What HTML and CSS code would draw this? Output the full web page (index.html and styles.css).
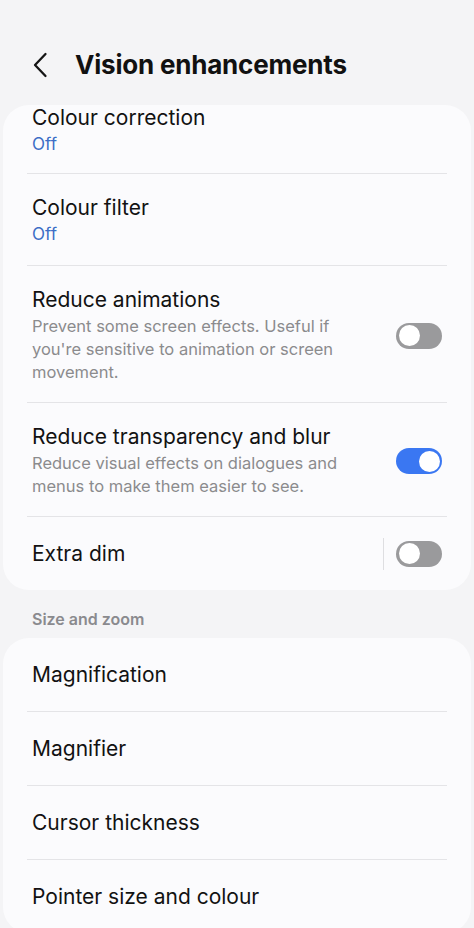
FILE: index.html
```html
<!DOCTYPE html>
<html lang="en">
<head>
<meta charset="utf-8">
<title>Vision enhancements</title>
<link rel="stylesheet" href="styles.css">
</head>
<body>
<div class="page">
  <header class="appbar">
    <svg class="back" width="16" height="26" viewBox="0 0 16 26" aria-hidden="true">
      <path d="M13.5 2 L3 13 L13.5 24" fill="none" stroke="#151515" stroke-width="2.3" stroke-linecap="round" stroke-linejoin="round"/>
    </svg>
    <h1 class="title">Vision enhancements</h1>
  </header>

  <section class="card">
    <div class="row row-first">
      <div class="text">
        <div class="label">Colour correction</div>
        <div class="value">Off</div>
      </div>
    </div>
    <div class="divider"></div>
    <div class="row">
      <div class="text">
        <div class="label">Colour filter</div>
        <div class="value">Off</div>
      </div>
    </div>
    <div class="divider"></div>
    <div class="row row-desc">
      <div class="text">
        <div class="label">Reduce animations</div>
        <div class="desc">Prevent some screen effects. Useful if you're sensitive to animation or screen movement.</div>
      </div>
      <div class="switch"><span class="knob"></span></div>
    </div>
    <div class="divider"></div>
    <div class="row row-desc">
      <div class="text">
        <div class="label">Reduce transparency and blur</div>
        <div class="desc">Reduce visual effects on dialogues and menus to make them easier to see.</div>
      </div>
      <div class="switch on"><span class="knob"></span></div>
    </div>
    <div class="divider"></div>
    <div class="row row-single">
      <div class="text">
        <div class="label">Extra dim</div>
      </div>
      <div class="vsep"></div>
      <div class="switch"><span class="knob"></span></div>
    </div>
  </section>

  <div class="section-title">Size and zoom</div>

  <section class="card">
    <div class="row row-single"><div class="label">Magnification</div></div>
    <div class="divider"></div>
    <div class="row row-single"><div class="label">Magnifier</div></div>
    <div class="divider"></div>
    <div class="row row-single"><div class="label">Cursor thickness</div></div>
    <div class="divider"></div>
    <div class="row row-single"><div class="label">Pointer size and colour</div></div>
  </section>
</div>
</body>
</html>
```

FILE: styles.css
```css
html, body {
  margin: 0;
  padding: 0;
  background: #f4f4f6;
}

body {
  font-family: Inter, "Noto Sans", Roboto, sans-serif;
  color: #121212;
  overflow: hidden;
}

.page {
  display: flex;
  flex-direction: column;
  height: 928px;
  overflow: hidden;
}

.appbar {
  height: 105px;
  display: flex;
  align-items: center;
  padding: 24px 0 0 32px;
  box-sizing: border-box;
  flex-shrink: 0;
}

.back {
  display: block;
  margin-right: 27px;
}

.title {
  margin: 0;
  font-size: 26px;
  font-weight: 700;
  letter-spacing: -0.2px;
  color: #111;
}

.card {
  background: #fbfbfd;
  border-radius: 26px;
  margin: 0 3px;
  flex-shrink: 0;
}

.row {
  display: flex;
  align-items: center;
  padding: 21px 29px 19px 29px;
}

.row-desc {
  padding-bottom: 18px;
}

.row-first {
  padding-top: 0;
  padding-bottom: 17px;
}

.row-single {
  height: 73px;
  padding-top: 0;
  padding-bottom: 0;
  box-sizing: border-box;
}

.text {
  flex: 1;
  min-width: 0;
}

.label {
  font-size: 21px;
  line-height: 26px;
  color: #121212;
}

.value {
  margin-top: 2px;
  font-size: 17px;
  line-height: 23px;
  color: #3c6ec6;
}

.desc {
  margin-top: 2px;
  font-size: 16.5px;
  line-height: 23px;
  color: #8b8b8d;
  padding-right: 44px;
}

.divider {
  height: 1px;
  background: #e4e4e7;
  margin: 0 24px;
}

.vsep {
  width: 1px;
  height: 32px;
  background: #dedee1;
  margin-right: 12px;
}

.switch {
  width: 46px;
  height: 26px;
  border-radius: 13px;
  background: #9a9a9c;
  display: flex;
  align-items: center;
  justify-content: flex-start;
  padding: 0 2.5px;
  box-sizing: border-box;
  flex-shrink: 0;
}

.switch.on {
  background: #3a77f2;
  justify-content: flex-end;
}

.knob {
  width: 21px;
  height: 21px;
  border-radius: 50%;
  background: #ffffff;
}

.section-title {
  padding: 19px 32px 9px;
  font-size: 16px;
  line-height: 20px;
  font-weight: 600;
  color: #8a8a8e;
  flex-shrink: 0;
}
```
